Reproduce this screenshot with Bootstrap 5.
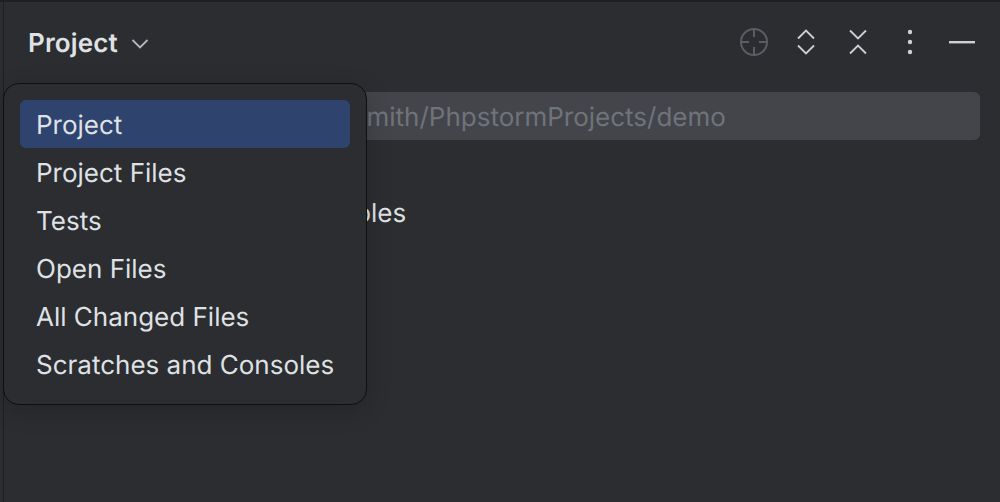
<!DOCTYPE html>
<html lang="en">
<head>
    <meta charset="UTF-8">
    <title>Project</title>
    <link href="https://cdn.jsdelivr.net/npm/bootstrap@5.3.2/dist/css/bootstrap.min.css" rel="stylesheet">
    <style>
        html, body {
            height: 100%;
            background: #2b2d30;
        }
        body {
            font-family: Inter, "Liberation Sans", sans-serif;
            color: #dfe1e5;
            overflow: hidden;
            text-rendering: geometricPrecision;
        }
        .top-edge {
            height: 2px;
            background: #1e1f22;
        }
        .tool-pane {
            position: relative;
            height: 500px;
            margin-left: 3px;
            border-left: 1px solid #1e1f22;
            background: #2b2d30;
        }
        .pane-head {
            height: 82px;
            padding: 0 12px 0 24px;
        }
        .pane-title {
            font-size: 26px;
            font-weight: 600;
            letter-spacing: 0.15px;
        }
        .pane-arrow {
            margin-left: 2px;
        }
        .head-tools {
            margin-bottom: 2px;
        }
        .tool-btn {
            display: flex;
            justify-content: center;
            width: 52px;
        }
        .tree-row {
            height: 48px;
            padding-top: 2px;
            font-size: 26px;
            white-space: nowrap;
        }
        .tree-row-active {
            margin: 8px 20px 0 0;
            background: #43454a;
            color: #6f737a;
            padding-left: 158px;
            border-radius: 0 6px 6px 0;
        }
        .tree-row-plain {
            margin-top: 48px;
            padding-left: 104px;
        }
        .scope-popup {
            position: absolute;
            left: -1px;
            top: 81px;
            width: 364px;
            height: 322px;
            padding: 16px 15px 15px 16px;
            background: #2b2d30;
            border: 1px solid #0f0f10;
            border-radius: 16px;
            box-shadow: 0 6px 24px rgba(0, 0, 0, 0.18);
        }
        .scope-item {
            height: 48px;
            margin-right: 1px;
            padding-left: 16px;
            font-size: 26px;
            line-height: 52px;
            color: #dfe1e5;
            border-radius: 6px;
            white-space: nowrap;
        }
        .scope-item-active {
            background: #2e436e;
        }
    </style>
</head>
<body>
<div class="top-edge"></div>
<div class="tool-pane">
    <div class="pane-head d-flex align-items-center justify-content-between">
        <div class="d-flex align-items-center gap-2">
            <span class="pane-title">Project</span>
            <svg class="pane-arrow" width="24" height="24" viewBox="0 0 24 24" fill="none" stroke="#b4b8bf" stroke-width="1.8"><path d="M4.5 9l7.5 7.5 7.5-7.5"/></svg>
        </div>
        <div class="head-tools d-flex align-items-center">
            <div class="tool-btn">
                <svg width="30" height="30" viewBox="0 0 30 30" fill="none" stroke="#5a5d63" stroke-width="2"><circle cx="15" cy="15" r="13"/><path d="M15 2v8M15 20v8M2 15h8M20 15h8"/></svg>
            </div>
            <div class="tool-btn">
                <svg width="20" height="28" viewBox="0 0 20 28" fill="none" stroke="#ced0d6" stroke-width="1.8"><path d="M2 10.5l8-8 8 8M2 17.5l8 8 8-8"/></svg>
            </div>
            <div class="tool-btn">
                <svg width="20" height="28" viewBox="0 0 20 28" fill="none" stroke="#ced0d6" stroke-width="1.8"><path d="M2 2.5l8 8 8-8M2 25.5l8-8 8 8"/></svg>
            </div>
            <div class="tool-btn">
                <svg width="6" height="26" viewBox="0 0 6 26" fill="#ced0d6"><circle cx="3" cy="3" r="2.2"/><circle cx="3" cy="13" r="2.2"/><circle cx="3" cy="23" r="2.2"/></svg>
            </div>
            <div class="tool-btn">
                <svg width="26" height="4" viewBox="0 0 26 4" fill="#ced0d6"><rect width="26" height="2.4" y="1"/></svg>
            </div>
        </div>
    </div>

    <div class="tree-row tree-row-active d-flex align-items-center">demo ~/Users/jsmith/PhpstormProjects/demo</div>
    <div class="tree-row tree-row-plain d-flex align-items-center">Scratches and Consoles</div>

    <div class="scope-popup">
        <div class="scope-item scope-item-active">Project</div>
        <div class="scope-item">Project Files</div>
        <div class="scope-item">Tests</div>
        <div class="scope-item">Open Files</div>
        <div class="scope-item">All Changed Files</div>
        <div class="scope-item">Scratches and Consoles</div>
    </div>
</div>
<script src="https://cdn.jsdelivr.net/npm/bootstrap@5.3.2/dist/js/bootstrap.bundle.min.js"></script>
</body>
</html>
